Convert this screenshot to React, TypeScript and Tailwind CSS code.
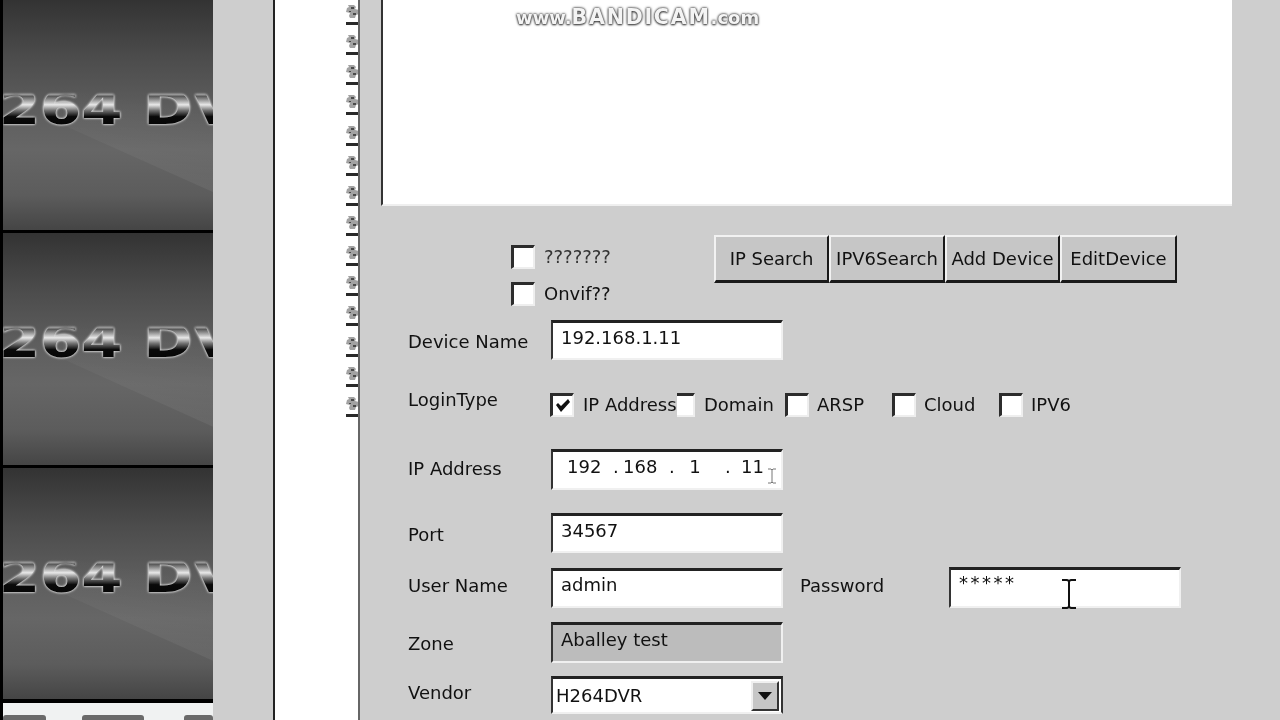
const FONT = "[font-family:'DejaVu_Sans',sans-serif]";

function VideoTile({ heightClass, id }: { heightClass: string; id: string }) {
  return (
    <div className={`relative w-full overflow-hidden bg-[linear-gradient(180deg,#333333_0%,#4c4c4c_25%,#5e5e5e_48%,#666666_65%,#5c5c5c_85%,#454545_100%)] ${heightClass}`}>
      <svg className="absolute inset-0 h-full w-full" viewBox="0 0 210 230" preserveAspectRatio="none">
        <defs>
          <linearGradient id={id} x1="0.6" y1="0" x2="0.4" y2="1">
            <stop offset="0.3" stopColor="#ffffff" stopOpacity="0" />
            <stop offset="1" stopColor="#ffffff" stopOpacity="0.07" />
          </linearGradient>
        </defs>
        <polygon points="60,125 210,192 210,60 60,60" fill={`url(#${id})`} />
      </svg>
      {/* logo is wider than the tile, clipped both sides */}
      <div className="absolute left-[-54px] top-[75px] origin-left scale-x-[1.29] whitespace-nowrap [filter:drop-shadow(0_0_1px_#f0f0f0)_drop-shadow(0_0_1px_#bbbbbb)]">
        <span className="bg-[linear-gradient(180deg,transparent_0%,transparent_24%,#555555_28%,#e8e8e8_44%,#777777_54%,#0a0a0a_66%,#000000_100%)] bg-clip-text text-[46px] leading-[66px] font-bold text-transparent [font-family:'DejaVu_Sans',sans-serif]">
          H264 DVR
        </span>
      </div>
    </div>
  );
}

function TreeStrip() {
  return (
    <div className="ml-[71px] flex h-[417px] w-[13px] flex-col overflow-hidden pt-[1px]">
      {Array.from({ length: 14 }).map((_, i) => (
        <div key={i} className="flex h-[30.15px] shrink-0 flex-col">
          <svg width="13" height="14" viewBox="0 0 13 14" className="mt-[3px]">
            <path d="M2 1h6l2 2-1 2 4 1v4l-3 1-1 3H4l-1-2 1-3-4-1 1-4 2-1z" fill="#a2a2a2" />
            <path d="M5 3h3v2H5zM3 7h2v1H3zM7 9h3v2H7z" fill="#4a4a4a" />
          </svg>
          <div className="mt-[4px] h-[3px] w-[13px] bg-[#2a2a2a]" />
        </div>
      ))}
    </div>
  );
}

function Check({ checked, sizeClass = "w-[24px]", open = false }: { checked?: boolean; sizeClass?: string; open?: boolean }) {
  return (
    <div className={`flex h-[24px] shrink-0 items-center justify-center border-t-[3px] border-r-[2px] border-b-[2px] border-t-[#2c2c2c] border-r-[#eeeeee] border-b-[#eeeeee] bg-white ${open ? "" : "border-l-[3px] border-l-[#2c2c2c]"} ${sizeClass}`}>
      {checked && (
        <svg width="16" height="14" viewBox="0 0 16 14">
          <path d="M1 6l2-2 3 3 7-7 2 3-9 10z" fill="#111111" />
        </svg>
      )}
    </div>
  );
}

function Field({ heightClass = "h-[40px]", bgClass = "bg-white", children }: { heightClass?: string; bgClass?: string; children: React.ReactNode }) {
  return (
    <div className={`relative w-[232px] shrink-0 border-t-[3px] border-r-[2px] border-b-[2px] border-l-[2px] border-t-[#222222] border-r-[#f0f0f0] border-b-[#f0f0f0] border-l-[#333333] pl-[8px] ${bgClass} ${heightClass}`}>
      {children}
    </div>
  );
}

function Label({ children, className = "" }: { children: React.ReactNode; className?: string }) {
  return <div className={`w-[143px] shrink-0 ${className}`}>{children}</div>;
}

function ToolButton({ label, widthClass }: { label: string; widthClass: string }) {
  return (
    <button className={`flex h-[48px] items-center justify-center border-t-[2px] border-r-[2px] border-b-[3px] border-l-[2px] border-t-[#f2f2f2] border-r-[#1a1a1a] border-b-[#1a1a1a] border-l-[#f2f2f2] bg-[#c6c6c6] whitespace-nowrap ${widthClass}`}>
      {label}
    </button>
  );
}

function IBeam({ className, color, tall }: { className: string; color: string; tall?: boolean }) {
  const h = tall ? 30 : 16;
  return (
    <svg className={`absolute ${className}`} width={tall ? 14 : 8} height={h} viewBox={`0 0 ${tall ? 14 : 8} ${h}`}>
      <path
        d={tall ? "M0 1h5l2 1 2-1h5M7 2v26M0 29h5l2-1 2 1h5" : "M0 1h3l1 1 1-1h3M4 2v12M0 15h3l1-1 1 1h3"}
        stroke={color}
        strokeWidth={tall ? 2 : 1}
        fill="none"
      />
    </svg>
  );
}

export default function App() {
  return (
    <div className={`relative flex h-[720px] w-[1280px] overflow-hidden bg-[#cecece] text-[18px] leading-[24px] text-[#111111] [filter:blur(0.3px)] ${FONT}`}>
      {/* video channels column */}
      <div className="flex h-full w-[213px] shrink-0 flex-col border-l-[3px] border-l-black bg-black">
        <VideoTile heightClass="h-[230px]" id="streak-1" />
        <div className="mt-[3px]">
          <VideoTile heightClass="h-[232px]" id="streak-2" />
        </div>
        <div className="mt-[3px]">
          <VideoTile heightClass="h-[231px]" id="streak-3" />
        </div>
        <div className="mt-[4px] flex flex-1 items-end gap-[36px] overflow-hidden bg-[#f0f2f2]">
          <div className="h-[5px] w-[44px] rounded-t-[3px] bg-[#6a6a6a]" />
          <div className="h-[5px] w-[63px] rounded-t-[3px] bg-[#6a6a6a]" />
          <div className="ml-[4px] h-[5px] w-[30px] rounded-t-[3px] bg-[#6a6a6a]" />
        </div>
      </div>

      {/* gray gutter */}
      <div className="w-[60px] shrink-0" />

      {/* device tree */}
      <div className="h-full w-[85px] shrink-0 border-l-[2px] border-l-[#222222] bg-white">
        <TreeStrip />
      </div>

      {/* add device panel */}
      <div className="flex h-full flex-1 flex-col border-l-[2px] border-l-[#666666] pl-[21px]">
        <div className="h-[206px] w-[851px] shrink-0 border-b-[2px] border-l-[2px] border-b-[#efefef] border-l-[#333333] bg-white" />

        <div className="flex flex-col pl-[27px]">
          <div className="mt-[29px] flex h-[70px]">
            <div className="ml-[103px] flex w-[203px] flex-col gap-[13px] pt-[10px]">
              <div className="flex items-center gap-[9px]">
                <Check />
                <span className="text-[#333333]">???????</span>
              </div>
              <div className="flex items-center gap-[9px]">
                <Check />
                <span>Onvif??</span>
              </div>
            </div>
            <div className="flex">
              <ToolButton label="IP Search" widthClass="w-[115px]" />
              <ToolButton label="IPV6Search" widthClass="w-[116px]" />
              <ToolButton label="Add Device" widthClass="w-[115px]" />
              <ToolButton label="EditDevice" widthClass="w-[117px]" />
            </div>
          </div>

          <div className="mt-[15px] flex items-center">
            <Label className="mt-[4px]">Device Name</Label>
            <Field>
              <div className="mt-[3px]">192.168.1.11</div>
            </Field>
          </div>

          <div className="mt-[33px] flex h-[24px] items-center">
            <div className="-mt-[10px] w-[142px] shrink-0">LoginType</div>
            <Check checked />
            <div className="ml-[9px] w-[94px] overflow-hidden whitespace-nowrap">IP Address</div>
            <Check open sizeClass="w-[18px]" />
            <div className="ml-[9px] w-[81px]">Domain</div>
            <Check />
            <div className="ml-[8px] w-[75px]">ARSP</div>
            <Check />
            <div className="ml-[8px] w-[75px]">Cloud</div>
            <Check />
            <div className="ml-[8px]">IPV6</div>
          </div>

          <div className="mt-[32px] flex items-center">
            <Label className="-mt-[2px]">IP Address</Label>
            <Field heightClass="h-[41px]">
              <div className="mt-[3px] flex whitespace-nowrap">
                <span className="ml-[6px] w-[46px]">192</span>
                <span className="w-[10px]">.</span>
                <span className="w-[46px]">168</span>
                <span className="w-[18px]">.</span>
                <span className="w-[16px] text-center">1</span>
                <span className="ml-[22px] w-[16px]">.</span>
                <span>11</span>
              </div>
              <IBeam className="right-[5px] top-[16px]" color="#777777" />
            </Field>
          </div>

          <div className="mt-[23px] flex items-center">
            <Label className="mt-[4px]">Port</Label>
            <Field>
              <div className="mt-[3px]">34567</div>
            </Field>
          </div>

          <div className="mt-[14px] flex items-center">
            <Label className="-mt-[4px]">User Name</Label>
            <Field>
              <div className="mt-[2px]">admin</div>
            </Field>
            <div className="ml-[17px] -mt-[4px] w-[149px] shrink-0">Password</div>
            <Field heightClass="h-[41px]">
              <div className="mt-[1px] tracking-[2.5px]">*****</div>
              <IBeam className="left-[111px] top-[9px]" color="#111111" tall />
            </Field>
          </div>

          <div className="mt-[14px] flex items-center">
            <Label className="mt-[2px]">Zone</Label>
            <Field heightClass="h-[41px]" bgClass="bg-[#bcbcbc]">
              <div className="mt-[3px]">Aballey test</div>
            </Field>
          </div>

          <div className="mt-[13px] flex items-center">
            <Label className="-mt-[5px]">Vendor</Label>
            <div className="flex h-[38px] w-[232px] shrink-0 items-center justify-between border-t-[3px] border-r-[2px] border-b-[2px] border-l-[2px] border-t-[#222222] border-r-[#333333] border-b-[#f0f0f0] border-l-[#333333] bg-white pl-[3px] pr-[2px]">
              <span>H264DVR</span>
              <div className="flex h-[30px] w-[28px] items-center justify-center border-t-[2px] border-r-[2px] border-b-[2px] border-l-[2px] border-t-[#f0f0f0] border-r-[#333333] border-b-[#333333] border-l-[#f0f0f0] bg-[#c6c6c6]">
                <svg width="14" height="8" viewBox="0 0 14 8">
                  <path d="M0 0h14L7 8z" fill="#111111" />
                </svg>
              </div>
            </div>
          </div>
        </div>
      </div>

      {/* recorder watermark over the capture */}
      <div className="absolute left-[516px] top-[4px] flex items-baseline whitespace-nowrap font-bold leading-[26px] text-[#f4f4f4] [font-family:'DejaVu_Sans',sans-serif] [text-shadow:0_0_3px_#444444,0_0_2px_#444444,0_1px_2px_#555555]">
        <span className="text-[18px]">www.</span>
        <span className="text-[20.5px] tracking-[1.8px]">BANDICAM</span>
        <span className="text-[18px]">.com</span>
      </div>
    </div>
  );
}
